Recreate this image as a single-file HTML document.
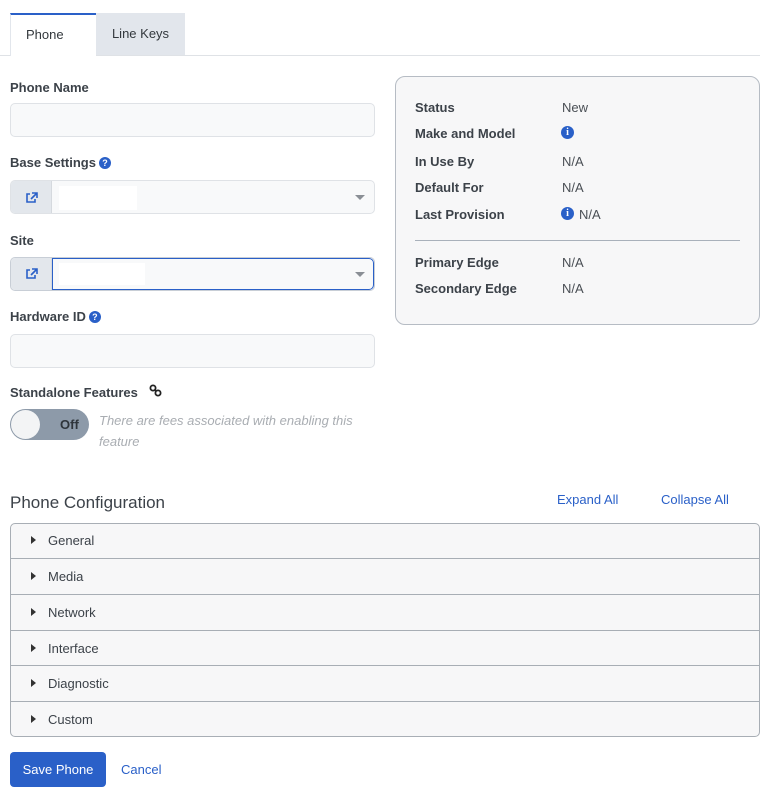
<!DOCTYPE html>
<html><head><style>
*{box-sizing:border-box;margin:0;padding:0}
body{width:768px;height:790px;background:#fff;font-family:"Liberation Sans",sans-serif;color:#33383d;position:relative;overflow:hidden;font-size:13px}
.a{position:absolute}
.lbl{font-weight:bold;font-size:13px;color:#3c4249}
.inp{position:absolute;left:10px;width:365px;height:34px;border:1px solid #dfe2e6;border-radius:5px;background:#f8f9fa}
.sel{position:absolute;left:10px;width:365px;height:34px;border:1px solid #dfe2e6;border-radius:5px;background:#f8f9fa;overflow:hidden}
.sel .ad{position:absolute;left:0;top:0;bottom:0;width:41px;background:#e3e7ec;border-right:1px solid #d5d9de}
.sel .car{position:absolute;right:9px;top:14px;border-left:5px solid transparent;border-right:5px solid transparent;border-top:5px solid #8a8f95}
.q{display:inline-block;width:12px;height:12px;border-radius:50%;background:#2a60c8;color:#fff;font-size:9px;font-weight:bold;line-height:12px;text-align:center;vertical-align:1px;margin-left:3px}
.i{position:absolute;width:13px;height:13px;border-radius:50%;background:#2a60c8;color:#fff;font-size:10px;font-weight:bold;line-height:13px;text-align:center;font-family:"Liberation Serif",serif}
.row{position:absolute;left:11px;width:748px;height:35.7px;border-top:1px solid #a8aeb5;font-size:13px;line-height:35px;padding-left:37px;color:#3c4249}
.row:before{content:"";position:absolute;left:20px;top:13px;border-top:4px solid transparent;border-bottom:4px solid transparent;border-left:5px solid #333}
.k{position:absolute;left:415px;font-weight:bold;color:#3c4249}
.v{position:absolute;left:562px;color:#4a4f55}
</style></head><body>
<div class="a" style="left:0;top:55px;width:760px;height:1px;background:#dfe2e6"></div>
<div class="a" style="left:10px;top:13px;width:86px;height:43px;background:#fff;border-top:2px solid #2a60c8;border-left:1px solid #e2e6ec;padding-left:15px;line-height:40px;font-size:13px">Phone</div>
<div class="a" style="left:96px;top:13px;width:89px;height:42px;background:#e2e6ec;text-align:center;line-height:42px;font-size:13px">Line Keys</div>

<div class="a lbl" style="left:10px;top:80px">Phone Name</div>
<div class="inp" style="top:103px"></div>
<div class="a lbl" style="left:10px;top:155px">Base Settings<span class="q">?</span></div>
<div class="sel" style="top:180px"><div class="ad"><svg class="a" style="left:14px;top:11px" width="13" height="12" viewBox="0 0 13 12"><path d="M5 2H2v8h8V7" fill="none" stroke="#2a60c8" stroke-width="1.6"/><path d="M7 1h5v5M12 1 6 7" fill="none" stroke="#2a60c8" stroke-width="1.6"/></svg></div><div class="a" style="left:48px;top:5px;width:78px;height:24px;background:#fff"></div><div class="car"></div></div>
<div class="a lbl" style="left:10px;top:233px">Site</div>
<div class="sel" style="top:257px;border-color:#c8ced6"><div class="ad"><svg class="a" style="left:14px;top:10px" width="13" height="12" viewBox="0 0 13 12"><path d="M5 2H2v8h8V7" fill="none" stroke="#2a60c8" stroke-width="1.6"/><path d="M7 1h5v5M12 1 6 7" fill="none" stroke="#2a60c8" stroke-width="1.6"/></svg></div><div class="a" style="left:41px;top:0;right:0;bottom:0;border:1px solid #2a60c8;border-radius:0 5px 5px 0"></div><div class="a" style="left:48px;top:5px;width:86px;height:22px;background:#fff"></div><div class="car"></div></div>
<div class="a lbl" style="left:10px;top:309px">Hardware ID<span class="q">?</span></div>
<div class="inp" style="top:334px"></div>
<div class="a lbl" style="left:10px;top:385px">Standalone Features</div>
<svg class="a" style="left:149px;top:384px" width="13" height="13" viewBox="0 0 13 13"><circle cx="4" cy="4" r="2.6" fill="none" stroke="#222" stroke-width="1.8"/><circle cx="9" cy="9" r="2.6" fill="none" stroke="#222" stroke-width="1.8"/><path d="M5.5 5.5 7.5 7.5" stroke="#222" stroke-width="1.8"/></svg>
<div class="a" style="left:10px;top:409px;width:79px;height:31px;border-radius:16px;background:#8d9aa9"></div>
<div class="a" style="left:11px;top:410px;width:29px;height:29px;border-radius:50%;background:#f3f4f5"></div>
<div class="a" style="left:60px;top:417px;font-weight:bold;font-size:13px;color:#2f353b">Off</div>
<div class="a" style="left:99px;top:410px;width:270px;font-style:italic;color:#a9adb2;line-height:21px;font-size:13px">There are fees associated with enabling this feature</div>

<div class="a" style="left:395px;top:76px;width:365px;height:249px;border:1px solid #b6bcc4;border-radius:10px;background:#f7f7f8"></div>
<div class="k" style="top:100px">Status</div><div class="v" style="top:100px">New</div>
<div class="k" style="top:126px">Make and Model</div><div class="i" style="left:561px;top:126px">i</div>
<div class="k" style="top:154px">In Use By</div><div class="v" style="top:154px">N/A</div>
<div class="k" style="top:180px">Default For</div><div class="v" style="top:180px">N/A</div>
<div class="k" style="top:207px">Last Provision</div><div class="i" style="left:561px;top:207px">i</div><div class="v" style="left:579px;top:207px">N/A</div>
<div class="a" style="left:415px;top:240px;width:325px;height:1px;background:#a9b1bb"></div>
<div class="k" style="top:255px">Primary Edge</div><div class="v" style="top:255px">N/A</div>
<div class="k" style="top:281px">Secondary Edge</div><div class="v" style="top:281px">N/A</div>

<div class="a" style="left:10px;top:493px;font-size:17px;color:#3c4249">Phone Configuration</div>
<div class="a" style="left:557px;top:492px;color:#2a60c8;font-size:13px">Expand All</div>
<div class="a" style="left:661px;top:492px;color:#2a60c8;font-size:13px">Collapse All</div>
<div class="a" style="left:10px;top:523px;width:750px;height:214px;border:1px solid #a8aeb5;border-radius:5px;background:#f7f7f8"></div>
<div class="row" style="top:523px;border-top:none">General</div>
<div class="row" style="top:558px">Media</div>
<div class="row" style="top:594px">Network</div>
<div class="row" style="top:630px">Interface</div>
<div class="row" style="top:665px">Diagnostic</div>
<div class="row" style="top:701px">Custom</div>

<div class="a" style="left:10px;top:752px;width:96px;height:35px;border-radius:4px;background:#2a60c8;color:#fff;text-align:center;line-height:35px;font-size:13px">Save Phone</div>
<div class="a" style="left:121px;top:762px;color:#2a60c8;font-size:13px">Cancel</div>
</body></html>
